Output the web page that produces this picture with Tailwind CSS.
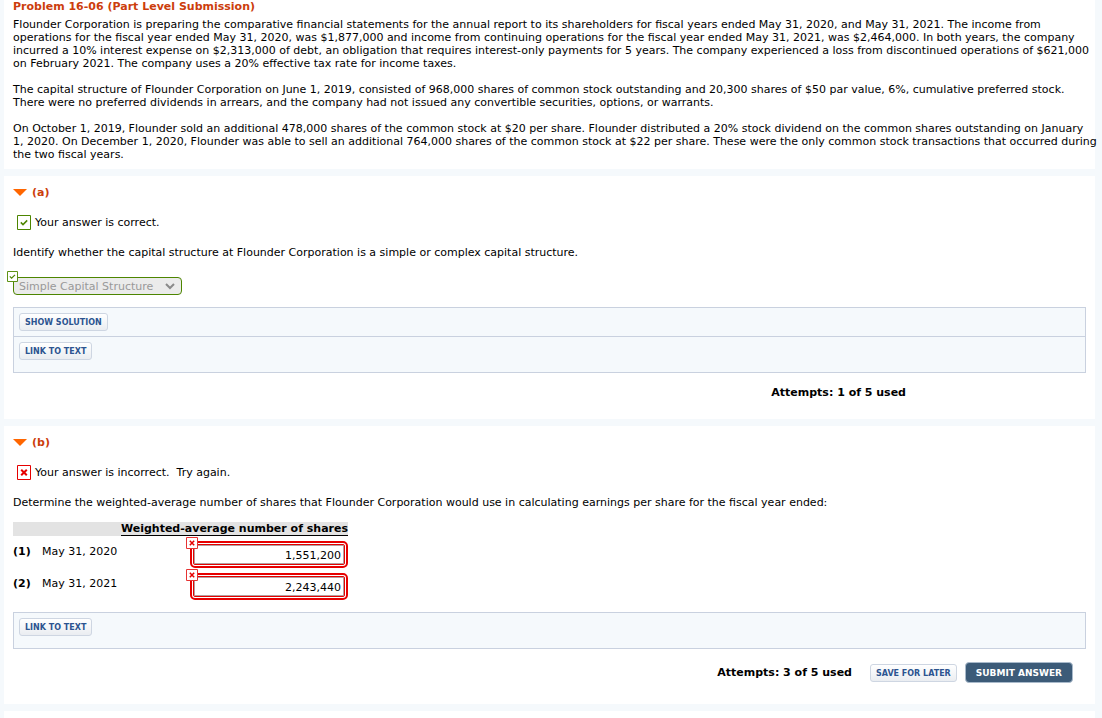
<!DOCTYPE html>
<html lang="en">
<head>
    <meta charset="UTF-8">
    <meta name="viewport" content="width=device-width, initial-scale=1.0">
    <title>Problem 16-06</title>
    <script src="https://cdn.jsdelivr.net/npm/@tailwindcss/browser@4"></script>
</head>
<body class="bg-[#f5f9fc] font-['Verdana','DejaVu_Sans',sans-serif] text-[11px] leading-[13px] text-black">

<main class="ml-1 mr-[7px] flex flex-col gap-[7px]">
    <!-- Problem text -->
    <section class="bg-white px-[9px] pb-2">
        <h1 class="mb-[5px] font-bold text-[#cc3d0c]">Problem 16-06 (Part Level Submission)</h1>
        <div class="flex flex-col gap-[13px] lg:whitespace-nowrap">
            <p>
                Flounder Corporation is preparing the comparative financial statements for the annual report to its shareholders for fiscal years ended May 31, 2020, and May 31, 2021. The income from<br>
                operations for the fiscal year ended May 31, 2020, was $1,877,000 and income from continuing operations for the fiscal year ended May 31, 2021, was $2,464,000. In both years, the company<br>
                incurred a 10% interest expense on $2,313,000 of debt, an obligation that requires interest-only payments for 5 years. The company experienced a loss from discontinued operations of $621,000<br>
                on February 2021. The company uses a 20% effective tax rate for income taxes.
            </p>
            <p>
                The capital structure of Flounder Corporation on June 1, 2019, consisted of 968,000 shares of common stock outstanding and 20,300 shares of $50 par value, 6%, cumulative preferred stock.<br>
                There were no preferred dividends in arrears, and the company had not issued any convertible securities, options, or warrants.
            </p>
            <p>
                On October 1, 2019, Flounder sold an additional 478,000 shares of the common stock at $20 per share. Flounder distributed a 20% stock dividend on the common shares outstanding on January<br>
                1, 2020. On December 1, 2020, Flounder was able to sell an additional 764,000 shares of the common stock at $22 per share. These were the only common stock transactions that occurred during<br>
                the two fiscal years.
            </p>
        </div>
    </section>

    <!-- Part (a) -->
    <section class="bg-white px-[9px] pt-2 pb-5">
        <h2 class="flex h-4 items-center gap-[5px] font-bold text-[#cc3d0c]">
            <svg class="mt-px h-[7px] w-[14px]" viewBox="0 0 14 7"><path d="M0 0h14L7 7z" fill="#ff6600"/></svg>
            (a)
        </h2>
        <p class="mt-[14px] ml-1 flex h-4 items-center gap-1">
            <svg class="h-[15px] w-[14px]" viewBox="0 0 14 15"><path d="M.5.5h13v14H.5z" fill="#fff" stroke="#4d8500"/><path d="M3.8 7.4l2.2 2.2 4.2-4.2" fill="none" stroke="#4d8500" stroke-width="1.5"/></svg>
            <span class="pt-px">Your answer is correct.</span>
        </p>
        <label for="structure" class="mt-4 block">Identify whether the capital structure at Flounder Corporation is a simple or complex capital structure.</label>
        <div class="relative mt-[18px] w-[169px]">
            <select id="structure" disabled class="block h-[18px] w-full appearance-none rounded-[4px] border border-[#4d8500] bg-[#ebebeb] pt-[2px] pl-[5px] text-[11px] leading-[14px] text-[#999] opacity-100">
                <option>Simple Capital Structure</option>
            </select>
            <svg class="pointer-events-none absolute top-[6px] right-[7px] h-[7px] w-[10px]" viewBox="0 0 10 7"><path d="M1 1l4 4 4-4" fill="none" stroke="#8a8a8a" stroke-width="2"/></svg>
            <svg class="absolute -top-[6px] -left-[6px] size-[11px]" viewBox="0 0 11 11"><path d="M.5.5h10v10H.5z" fill="#fff" stroke="#5d9216"/><path d="M2.8 5.4l1.8 1.8 3.4-3.4" fill="none" stroke="#4d8500" stroke-width="1.2"/></svg>
        </div>
        <div class="mt-3 border border-[#c9d1df] bg-[#f5f9fc]">
            <div class="border-b border-[#c9d1df] p-[5px]">
                <button class="block h-[18px] rounded-[3px] border border-[#ced6e2] bg-linear-to-b from-white to-[#eaedf1] px-[5px] pt-px text-[8px] leading-[15px] font-bold text-[#2c5490]">SHOW SOLUTION</button>
            </div>
            <div class="px-[5px] pt-[5px] pb-3">
                <button class="block h-[18px] rounded-[3px] border border-[#ced6e2] bg-linear-to-b from-white to-[#eaedf1] px-[5px] pt-px text-[8px] leading-[15px] font-bold text-[#2c5490]">LINK TO TEXT</button>
            </div>
        </div>
        <p class="mt-[13px] mr-[180px] text-right font-bold">Attempts: 1 of 5 used</p>
    </section>

    <!-- Part (b) -->
    <section class="bg-white px-[9px] pt-2 pb-[21px]">
        <h2 class="flex h-4 items-center gap-[5px] font-bold text-[#cc3d0c]">
            <svg class="mt-px h-[7px] w-[14px]" viewBox="0 0 14 7"><path d="M0 0h14L7 7z" fill="#ff6600"/></svg>
            (b)
        </h2>
        <p class="mt-[14px] ml-1 flex h-4 items-center gap-1">
            <svg class="h-[15px] w-[14px]" viewBox="0 0 14 15"><path d="M.5.5h13v14H.5z" fill="#fff" stroke="#e60000"/><path d="M4.2 4.7l5.6 5.6M9.8 4.7l-5.6 5.6" stroke="#e60000" stroke-width="2"/></svg>
            <span class="pt-px">Your answer is incorrect.&nbsp; Try again.</span>
        </p>
        <p class="mt-4">Determine the weighted-average number of shares that Flounder Corporation would use in calculating earnings per share for the fiscal year ended:</p>
        <table class="mt-[13px] w-[335px] table-fixed border-collapse">
            <thead>
                <tr class="bg-[#e3e3e3]">
                    <td class="w-[29px] p-0"></td>
                    <td class="w-[84px] p-0"></td>
                    <th class="p-0 whitespace-nowrap">
                        <div class="flex justify-end"><span class="border-b border-black">Weighted-average number of shares</span></div>
                    </th>
                </tr>
            </thead>
            <tbody>
                <tr class="h-8 align-top">
                    <td class="p-0 pt-[9px] font-bold">(1)</td>
                    <td class="p-0 pt-[9px] whitespace-nowrap"><label for="shares2020">May 31, 2020</label></td>
                    <td class="p-0 pt-[5px]">
                        <div class="relative ml-auto w-[158px] rounded-[5px] border-2 border-[#e60000] bg-white p-px">
                            <input id="shares2020" type="text" value="1,551,200" class="block h-[21px] w-full rounded-[2px] border border-[#e60000] px-[3px] pt-px text-right text-[11px] leading-[13px] inset-ring inset-ring-[#b3a0a0]">
                            <svg class="absolute -top-[6px] -left-[6px] size-3" viewBox="0 0 12 12"><path d="M.5.5h11v11H.5z" fill="#fff" stroke="#e63333"/><path d="M3.8 3.8l4.4 4.4M8.2 3.8l-4.4 4.4" stroke="#e60000" stroke-width="1.5"/></svg>
                        </div>
                    </td>
                </tr>
                <tr class="h-8 align-top">
                    <td class="p-0 pt-[9px] font-bold">(2)</td>
                    <td class="p-0 pt-[9px] whitespace-nowrap"><label for="shares2021">May 31, 2021</label></td>
                    <td class="p-0 pt-[5px]">
                        <div class="relative ml-auto w-[158px] rounded-[5px] border-2 border-[#e60000] bg-white p-px">
                            <input id="shares2021" type="text" value="2,243,440" class="block h-[21px] w-full rounded-[2px] border border-[#e60000] px-[3px] pt-px text-right text-[11px] leading-[13px] inset-ring inset-ring-[#b3a0a0]">
                            <svg class="absolute -top-[6px] -left-[6px] size-3" viewBox="0 0 12 12"><path d="M.5.5h11v11H.5z" fill="#fff" stroke="#e63333"/><path d="M3.8 3.8l4.4 4.4M8.2 3.8l-4.4 4.4" stroke="#e60000" stroke-width="1.5"/></svg>
                        </div>
                    </td>
                </tr>
            </tbody>
        </table>
        <div class="mt-3 border border-[#c9d1df] bg-[#f5f9fc] px-[5px] pt-[5px] pb-3">
            <button class="block h-[18px] rounded-[3px] border border-[#ced6e2] bg-linear-to-b from-white to-[#eaedf1] px-[5px] pt-px text-[8px] leading-[15px] font-bold text-[#2c5490]">LINK TO TEXT</button>
        </div>
        <div class="mt-[13px] mr-[13px] flex items-center justify-end">
            <p class="mr-[18px] font-bold">Attempts: 3 of 5 used</p>
            <button class="mr-2 h-[18px] rounded-[3px] border border-[#ced6e2] bg-linear-to-b from-white to-[#eaedf1] px-[5px] pt-px text-[8px] leading-[15px] font-bold text-[#2c5490]">SAVE FOR LATER</button>
            <button class="h-[21px] rounded-[4px] border border-[#a9bacb] bg-[#3c5b78] px-[10px] pt-px text-[9px] leading-[18px] font-bold text-white">SUBMIT ANSWER</button>
        </div>
    </section>

    <section class="h-[7px] bg-white"></section>
</main>

</body>
</html>
